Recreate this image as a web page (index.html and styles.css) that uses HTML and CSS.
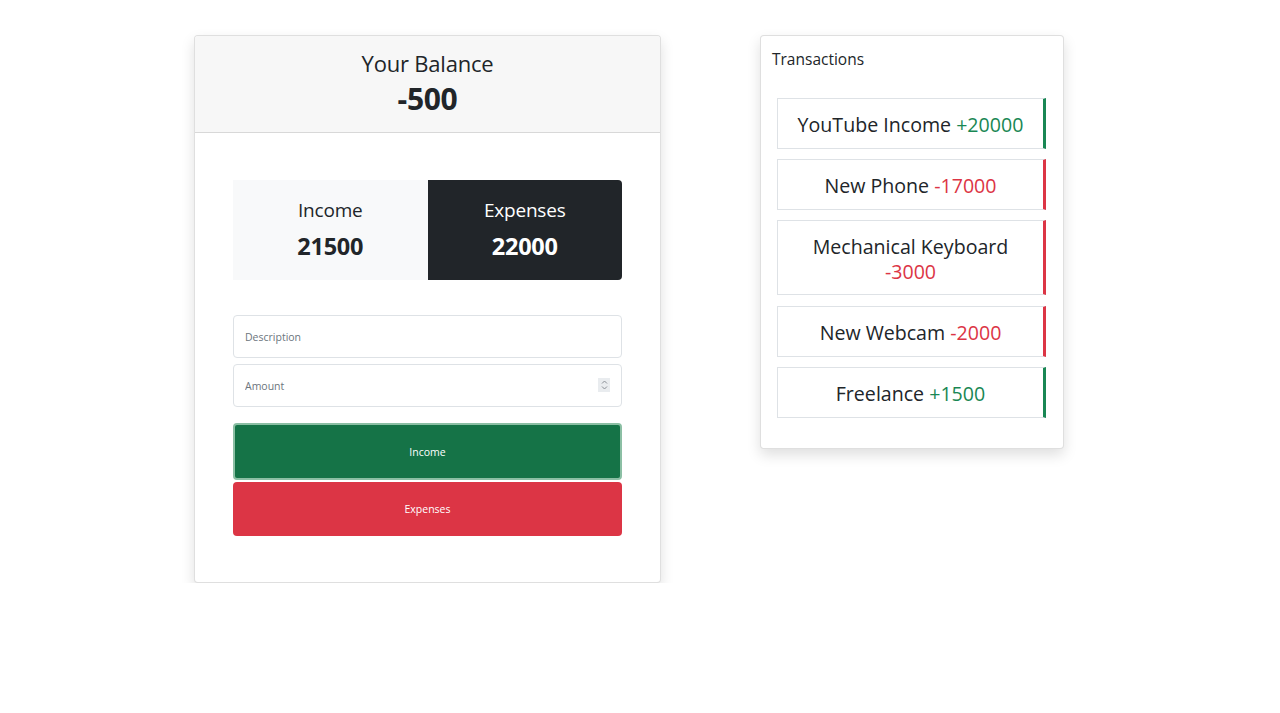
FILE: index.html
```html
<!DOCTYPE html>
<html lang="en">
<head>
<meta charset="utf-8">
<title>Expense Tracker</title>
<link rel="stylesheet" href="styles.css">
</head>
<body>
<main class="page">
  <section class="card wallet">
    <header class="wallet-head">
      <div class="balance-label">Your Balance</div>
      <div class="balance-value">-500</div>
    </header>
    <div class="wallet-body">
      <div class="summary">
        <div class="summary-cell income-cell">
          <div class="summary-label">Income</div>
          <div class="summary-value">21500</div>
        </div>
        <div class="summary-cell expense-cell">
          <div class="summary-label">Expenses</div>
          <div class="summary-value">22000</div>
        </div>
      </div>
      <form class="entry">
        <div class="field"><input class="input" type="text" placeholder="Description"></div>
        <div class="field">
          <input class="input" type="text" placeholder="Amount">
          <span class="spinner"><svg width="7" height="10" viewBox="0 0 7 10"><path d="M1 3.5 L3.5 1 L6 3.5 M1 6.5 L3.5 9 L6 6.5" fill="none" stroke="#8a8f96" stroke-width="1"/></svg></span>
        </div>
        <div class="buttons">
          <button type="button" class="btn btn-income">Income</button>
          <button type="button" class="btn btn-expense">Expenses</button>
        </div>
      </form>
    </div>
  </section>

  <section class="card history">
    <h2 class="history-title">Transactions</h2>
    <ul class="tx-list">
      <li class="tx plus">YouTube Income <span class="amt">+20000</span></li>
      <li class="tx minus">New Phone <span class="amt">-17000</span></li>
      <li class="tx minus">Mechanical Keyboard <span class="amt">-3000</span></li>
      <li class="tx minus">New Webcam <span class="amt">-2000</span></li>
      <li class="tx plus">Freelance <span class="amt">+1500</span></li>
    </ul>
  </section>
</main>
</body>
</html>
```

FILE: styles.css
```css
* { box-sizing: border-box; }
html, body { margin: 0; padding: 0; background: #fff; }
body {
  font-family: "Open Sans", "Noto Sans", "Liberation Sans", sans-serif;
  color: #212529;
}
.page {
  display: flex;
  align-items: flex-start;
  gap: 99px;
  padding: 35px 0 0 194px;
}
.card {
  background: #fff;
  border: 1px solid rgba(0,0,0,0.125);
  border-radius: 4px;
  box-shadow: 0 6px 14px rgba(0,0,0,0.13);
}
.wallet { width: 467px; }
.wallet-head {
  background: #f7f7f7;
  border-bottom: 1px solid rgba(0,0,0,0.125);
  border-radius: 3px 3px 0 0;
  height: 97px;
  text-align: center;
  padding-top: 13px;
}
.balance-label { font-size: 22px; line-height: 28px; letter-spacing: -0.2px; }
.balance-value { font-size: 30px; line-height: 44px; font-weight: 700; letter-spacing: -0.3px; }
.wallet-body { padding: 47px 38px 46px; }
.summary { display: flex; height: 100px; }
.summary-cell {
  flex: 1;
  display: flex;
  flex-direction: column;
  align-items: center;
  justify-content: center;
}
.income-cell { background: #f8f9fa; }
.expense-cell { background: #212529; color: #fff; border-radius: 0 4px 4px 0; }
.summary-label { font-size: 19px; line-height: 26px; letter-spacing: -0.2px; margin-bottom: 6px; }
.summary-value { font-size: 23.5px; line-height: 34px; font-weight: 700; letter-spacing: -0.2px; }
.entry { margin-top: 35px; }
.field { position: relative; margin-bottom: 6px; }
.input {
  display: block;
  width: 100%;
  height: 43px;
  border: 1px solid #dee2e6;
  border-radius: 4px;
  padding: 0 11px;
  font-family: inherit;
  font-size: 10.5px;
  color: #212529;
  background: #fff;
  outline: none;
}
.input::placeholder { color: #6c757d; }
.spinner {
  position: absolute;
  right: 12px;
  top: 14px;
  width: 12px;
  height: 14px;
  background: #e9ecef;
  display: flex;
  align-items: center;
  justify-content: center;
}
.buttons { display: flex; flex-direction: column; gap: 2px; margin-top: 16px; }
.btn {
  display: block;
  width: 100%;
  border: 0;
  border-radius: 4px;
  font-family: inherit;
  font-size: 10.5px;
  color: #fff;
}
.btn-income {
  height: 57px;
  background: #157347;
  border: 2px solid #8bbfa4;
}
.btn-expense { height: 54px; background: #dc3545; }
.history { width: 304px; padding: 11px 17px 30px 16px; }
.history-title {
  margin: 0 0 0 -5px;
  font-size: 15.5px;
  font-weight: 400;
  line-height: 24px;
}
.tx-list { list-style: none; margin: 27px 0 0; padding: 0; display: flex; flex-direction: column; gap: 10.7px; }
.tx {
  border: 1px solid #dee2e6;
  border-right: 3px solid;
  padding: 14px 14px 10px;
  text-align: center;
  font-size: 19.6px;
  line-height: 24.5px;
}
.tx.plus { border-right-color: #198754; }
.tx.minus { border-right-color: #dc3545; }
.tx.plus .amt { color: #198754; }
.tx.minus .amt { color: #dc3545; }
```
